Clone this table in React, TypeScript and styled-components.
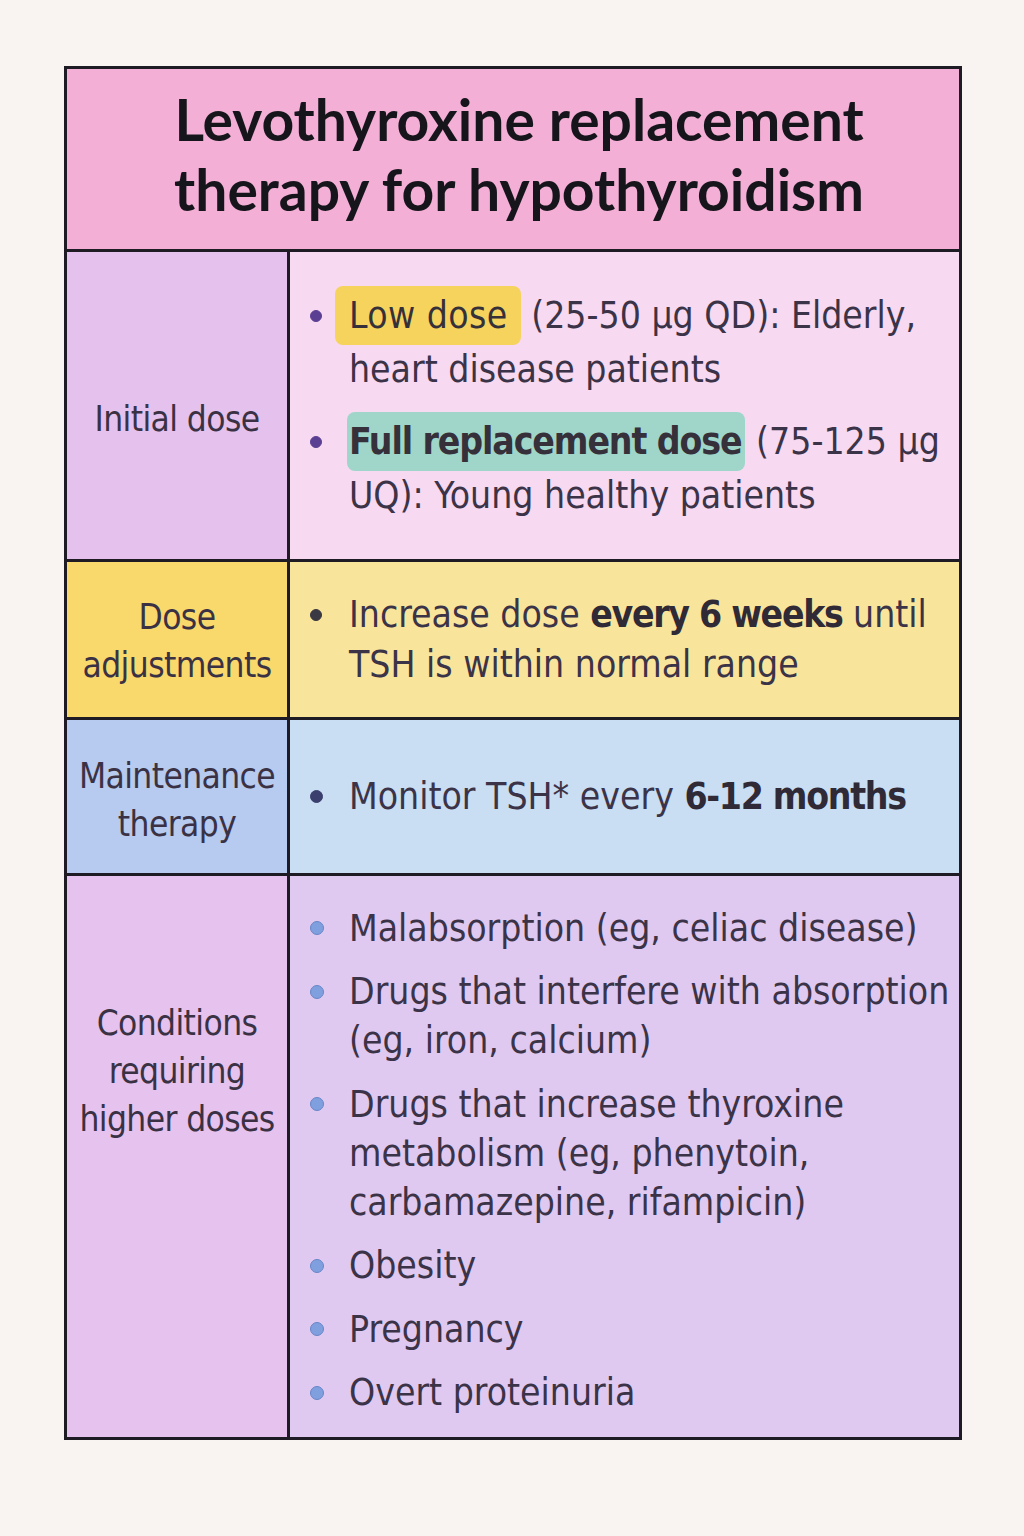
import { ReactNode } from "react";
import styled, { createGlobalStyle } from "styled-components";

const GlobalStyle = createGlobalStyle`
  html, body {
    margin: 0;
    padding: 0;
    background: #f9f4f2;
  }
  * {
    box-sizing: border-box;
  }
`;

const narrow = `"DejaVu Sans Condensed", "Liberation Sans Narrow", "Liberation Sans", sans-serif`;

const Page = styled.div`
  width: 1024px;
  height: 1536px;
  padding: 66px 62px 0 64px;
  background: #f9f4f2;
`;

const Table = styled.div`
  display: grid;
  grid-template-columns: 220px 669px;
  grid-template-rows: 180px 307px 155px 153px 561px;
  gap: 3px;
  padding: 3px;
  width: 898px;
  background: #1e1b24;
`;

const TitleCell = styled.div`
  grid-column: 1 / span 2;
  display: flex;
  align-items: center;
  justify-content: center;
  background: #f3afd5;
  font-family: Lato, "Open Sans", sans-serif;
  font-weight: 700;
  font-size: 57px;
  line-height: 70px;
  color: #17151c;
  text-align: center;
  padding: 0 0 10px 12px;
`;

const LabelCell = styled.div<{ $bg: string; $shift?: number }>`
  display: flex;
  align-items: center;
  justify-content: center;
  background: ${({ $bg }) => $bg};
  font-family: ${narrow};
  font-size: 35px;
  line-height: 48px;
  letter-spacing: -0.6px;
  white-space: nowrap;
  color: #3a3244;
  text-align: center;
  padding-top: ${({ $shift }) => Math.max(0, $shift ?? 0)}px;
  padding-bottom: ${({ $shift }) => Math.max(0, -($shift ?? 0))}px;
`;

const BodyCell = styled.div<{ $bg: string; $top?: number }>`
  display: flex;
  align-items: center;
  background: ${({ $bg }) => $bg};
  padding: ${({ $top }) => $top ?? 0}px 0 0 20px;
`;

const List = styled.ul<{ $gap: number; $lh: number }>`
  list-style: none;
  margin: 0;
  padding: 0;
  display: flex;
  flex-direction: column;
  gap: ${({ $gap }) => $gap}px;
  font-family: ${narrow};
  font-size: 37px;
  line-height: ${({ $lh }) => $lh}px;
  white-space: nowrap;
  color: #3b3347;
`;

const Item = styled.li`
  display: flex;
  align-items: flex-start;
`;

const BulletSlot = styled.span<{ $lh: number }>`
  flex: 0 0 39px;
  height: ${({ $lh }) => $lh}px;
  display: flex;
  align-items: center;
`;

const Dot = styled.span<{ $color: string; $ring?: string; $size: number }>`
  width: ${({ $size }) => $size}px;
  height: ${({ $size }) => $size}px;
  border-radius: 50%;
  background: ${({ $color }) => $color};
  border: 1.5px solid ${({ $ring, $color }) => $ring ?? $color};
`;

const Strong = styled.b`
  font-weight: 700;
  letter-spacing: -1.3px;
  color: #2f2a36;
`;

const Mark = styled.span<{ $bg: string; $bold?: boolean; $pad: number; $padRight?: number }>`
  background: ${({ $bg }) => $bg};
  border-radius: 8px;
  padding: 8px ${({ $pad, $padRight }) => $padRight ?? $pad}px 8px
    ${({ $pad }) => $pad}px;
  margin-left: -${({ $pad }) => $pad}px;
  font-weight: ${({ $bold }) => ($bold ? 700 : 400)};
  letter-spacing: ${({ $bold }) => ($bold ? "-1.1px" : "0.4px")};
  color: #35303a;
`;

type Bullet = { color: string; ring?: string; size?: number };

const Bulleted = ({
  items,
  bullet,
  gap,
  lh,
}: {
  items: ReactNode[];
  bullet: Bullet;
  gap: number;
  lh: number;
}) => (
  <List $gap={gap} $lh={lh}>
    {items.map((content, i) => (
      <Item key={i}>
        <BulletSlot $lh={lh}>
          <Dot
            $color={bullet.color}
            $ring={bullet.ring}
            $size={bullet.size ?? 13}
          />
        </BulletSlot>
        <span>{content}</span>
      </Item>
    ))}
  </List>
);

export default function App() {
  return (
    <>
      <GlobalStyle />
      <Page>
        <Table>
          <TitleCell>
            Levothyroxine replacement
            <br />
            therapy for hypothyroidism
          </TitleCell>

          <LabelCell $bg="#e5c2ee" $shift={26}>
            Initial dose
          </LabelCell>
          <BodyCell $bg="#f7d9f1">
            <Bulleted
              bullet={{ color: "#5b3f93", size: 12 }}
              gap={18}
              lh={54}
              items={[
                <>
                  <Mark $bg="#f5d35c" $pad={14} $padRight={13}>
                    Low dose
                  </Mark>
                  {"  "}(25-50 µg QD): Elderly,
                  <br />
                  heart disease patients
                </>,
                <>
                  <Mark $bg="#9fd6c9" $pad={2} $padRight={4} $bold>
                    Full replacement dose
                  </Mark>{" "}
                  (75-125 µg
                  <br />
                  UQ): Young healthy patients
                </>,
              ]}
            />
          </BodyCell>

          <LabelCell $bg="#f9d86c" $shift={2}>
            Dose
            <br />
            adjustments
          </LabelCell>
          <BodyCell $bg="#f9e49c">
            <Bulleted
              bullet={{ color: "#3a3842", size: 12 }}
              gap={0}
              lh={50}
              items={[
                <>
                  Increase dose <Strong>every 6 weeks</Strong> until
                  <br />
                  TSH is within normal range
                </>,
              ]}
            />
          </BodyCell>

          <LabelCell $bg="#b7caef" $shift={6}>
            Maintenance
            <br />
            therapy
          </LabelCell>
          <BodyCell $bg="#c9ddf3">
            <Bulleted
              bullet={{ color: "#3b3f6e", size: 13 }}
              gap={0}
              lh={50}
              items={[
                <>
                  Monitor TSH* every <Strong>6-12 months</Strong>
                </>,
              ]}
            />
          </BodyCell>

          <LabelCell $bg="#e6c2ee" $shift={-172}>
            Conditions
            <br />
            requiring
            <br />
            higher doses
          </LabelCell>
          <BodyCell $bg="#e0c9f1" $top={8}>
            <Bulleted
              bullet={{ color: "#7f9fde", ring: "#6886c6", size: 14 }}
              gap={14.6}
              lh={49}
              items={[
                "Malabsorption (eg, celiac disease)",
                <>
                  Drugs that interfere with absorption
                  <br />
                  (eg, iron, calcium)
                </>,
                <>
                  Drugs that increase thyroxine
                  <br />
                  metabolism (eg, phenytoin,
                  <br />
                  carbamazepine, rifampicin)
                </>,
                "Obesity",
                "Pregnancy",
                "Overt proteinuria",
              ]}
            />
          </BodyCell>
        </Table>
      </Page>
    </>
  );
}
